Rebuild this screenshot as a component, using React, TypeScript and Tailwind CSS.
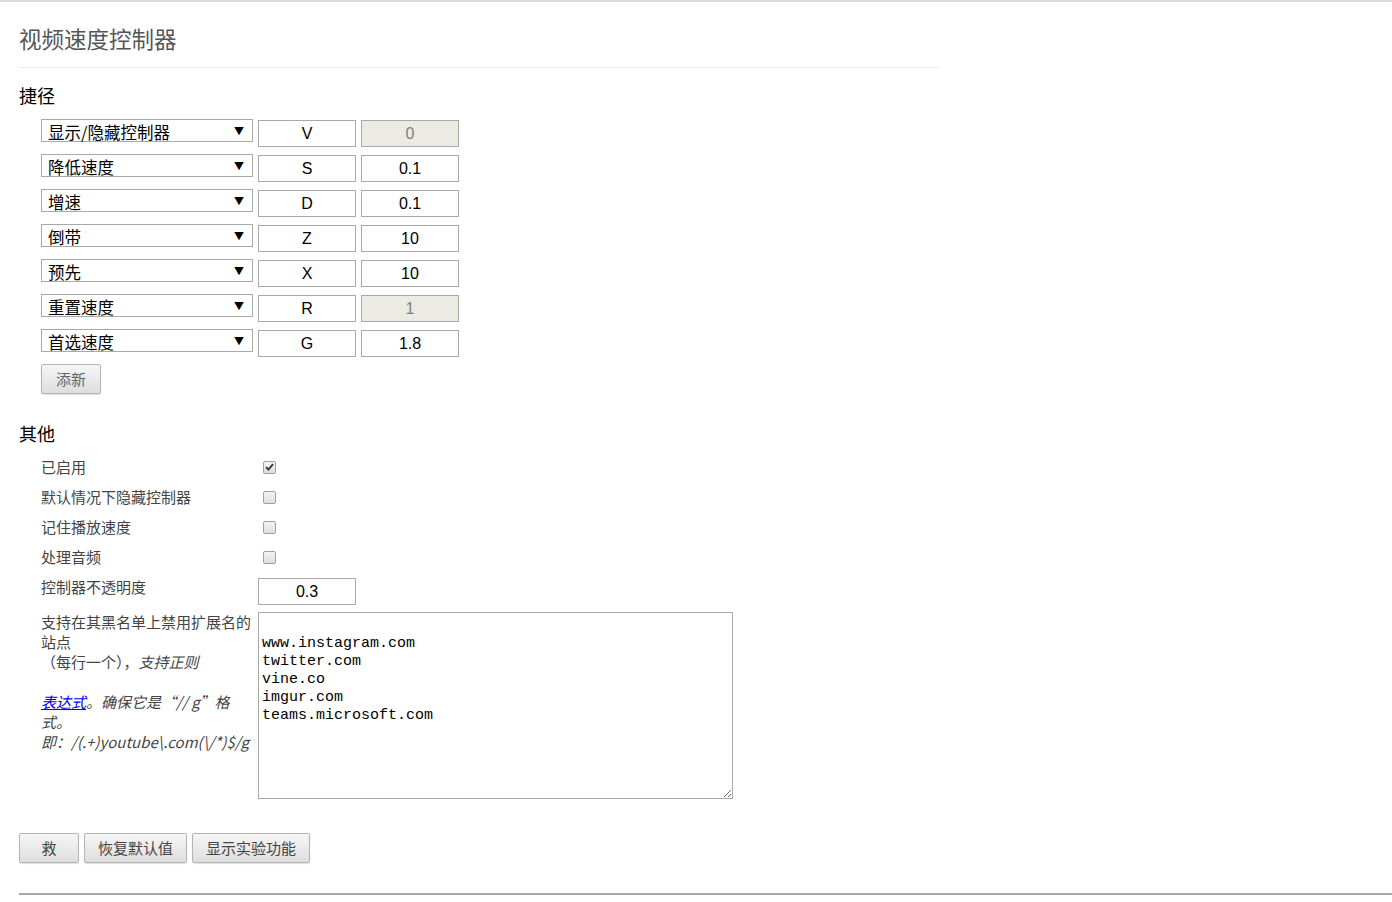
const cjk = "font-['Noto_Sans_CJK_SC','Microsoft_YaHei',sans-serif]";

const shortcuts = [
  { action: "显示/隐藏控制器", key: "V", value: "0", disabled: true },
  { action: "降低速度", key: "S", value: "0.1" },
  { action: "增速", key: "D", value: "0.1" },
  { action: "倒带", key: "Z", value: "10" },
  { action: "预先", key: "X", value: "10" },
  { action: "重置速度", key: "R", value: "1", disabled: true },
  { action: "首选速度", key: "G", value: "1.8" },
];

const options = [
  { label: "已启用", checked: true },
  { label: "默认情况下隐藏控制器", checked: false },
  { label: "记住播放速度", checked: false },
  { label: "处理音频", checked: false },
];

const blacklist = "\nwww.instagram.com\ntwitter.com\nvine.co\nimgur.com\nteams.microsoft.com";

function Field({ text, disabled }: { text: string; disabled?: boolean }) {
  return (
    <div
      className={`mt-px flex h-[27px] w-[98px] items-center justify-center border border-[#a9a9a9] font-['Liberation_Sans',Arial,sans-serif] text-[16px] ${
        disabled ? "bg-[#ebebe4] text-[#808080]" : "bg-white text-black"
      }`}
    >
      {text}
    </div>
  );
}

function Checkbox({ checked }: { checked: boolean }) {
  return (
    <span className="ml-[5px] flex h-[13px] w-[13px] items-center justify-center rounded-[2px] border border-[#a0a0a0] bg-gradient-to-b from-[#f4f4f4] to-[#dedede]">
      {checked && (
        <svg width="9" height="8" viewBox="0 0 9 8">
          <path d="M1 4.2 L3.4 6.6 L8 1.2" fill="none" stroke="#333" strokeWidth="1.8" />
        </svg>
      )}
    </span>
  );
}

function GrayButton({ label, className = "" }: { label: string; className?: string }) {
  return (
    <button
      type="button"
      className={`h-[30px] min-w-[60px] rounded-[2px] border border-[#b4b4b4] bg-gradient-to-b from-[#f6f6f6] to-[#dedede] px-[13px] text-[15px] shadow-[0_1px_1px_rgba(0,0,0,0.12)] ${className}`}
    >
      {label}
    </button>
  );
}

export default function App() {
  return (
    <div className={`min-h-[902px] bg-white ${cjk}`}>
      <div className="h-[2px] bg-[#dadade]" />
      <div className="pl-[19px]">
        <h1 className="mt-[20px] w-[921px] border-b border-[#eeeeee] pb-[13px] text-[22.5px] leading-[32px] font-normal text-[#555]">
          视频速度控制器
        </h1>

        <h2 className="mt-[15px] text-[18px] leading-[24px] text-black">捷径</h2>
        <div className="mt-[12px] pl-[22px]">
          {shortcuts.map((s) => (
            <div key={s.key} className="flex h-[35px] items-start gap-[5px]">
              <div className="flex h-[23px] w-[212px] items-center justify-between border border-[#a9a9a9] bg-white pr-[8px] pl-[6px]">
                <span className="pt-[3px] text-[16.5px] leading-[20px] text-black">{s.action}</span>
                <span className="text-[10px] text-black">▼</span>
              </div>
              <Field text={s.key} />
              <Field text={s.value} disabled={s.disabled} />
            </div>
          ))}
          <GrayButton label="添新" className="text-[#666]" />
        </div>

        <h2 className="mt-[27px] text-[18px] leading-[24px] text-black">其他</h2>
        <div className="mt-[7px] pl-[22px] text-[15px] text-[#444]">
          {options.map((o) => (
            <div key={o.label} className="flex h-[30px] items-center">
              <span className="w-[217px] leading-[20px]">{o.label}</span>
              <Checkbox checked={o.checked} />
            </div>
          ))}
          <div className="flex h-[30px] items-start pt-[5px]">
            <span className="w-[217px] leading-[20px]">控制器不透明度</span>
            <div className="mt-px flex h-[27px] w-[98px] items-center justify-center border border-[#a9a9a9] font-['Liberation_Sans',Arial,sans-serif] text-[16px] text-black">
              0.3
            </div>
          </div>
          <div className="mt-[10px] flex items-start">
            <div className="w-[217px] leading-[20px]">
              支持在其黑名单上禁用扩展名的站点
              <br />
              （每行一个），<em>支持正则</em>
              <br />
              <br />
              <em>
                <a href="#" className="text-[#0000ee] underline">
                  表达式
                </a>
                。确保它是“// g”格式。
              </em>
              <br />
              <em className="whitespace-nowrap">即：/(.+)youtube\.com(\/*)$/g</em>
            </div>
            <textarea
              readOnly
              value={blacklist}
              className="h-[187px] w-[475px] resize border border-[#a9a9a9] px-[3px] pt-[4px] font-['Liberation_Mono','Noto_Sans_CJK_SC',monospace] text-[15px] leading-[18px] text-black outline-none"
            />
          </div>
        </div>

        <div className="mt-[34px] flex gap-[5px] text-[#444]">
          <GrayButton label="救" />
          <GrayButton label="恢复默认值" />
          <GrayButton label="显示实验功能" />
        </div>
        <div className="mt-[30px] border-t-2 border-t-[#a8a8a8]" />
      </div>
    </div>
  );
}
